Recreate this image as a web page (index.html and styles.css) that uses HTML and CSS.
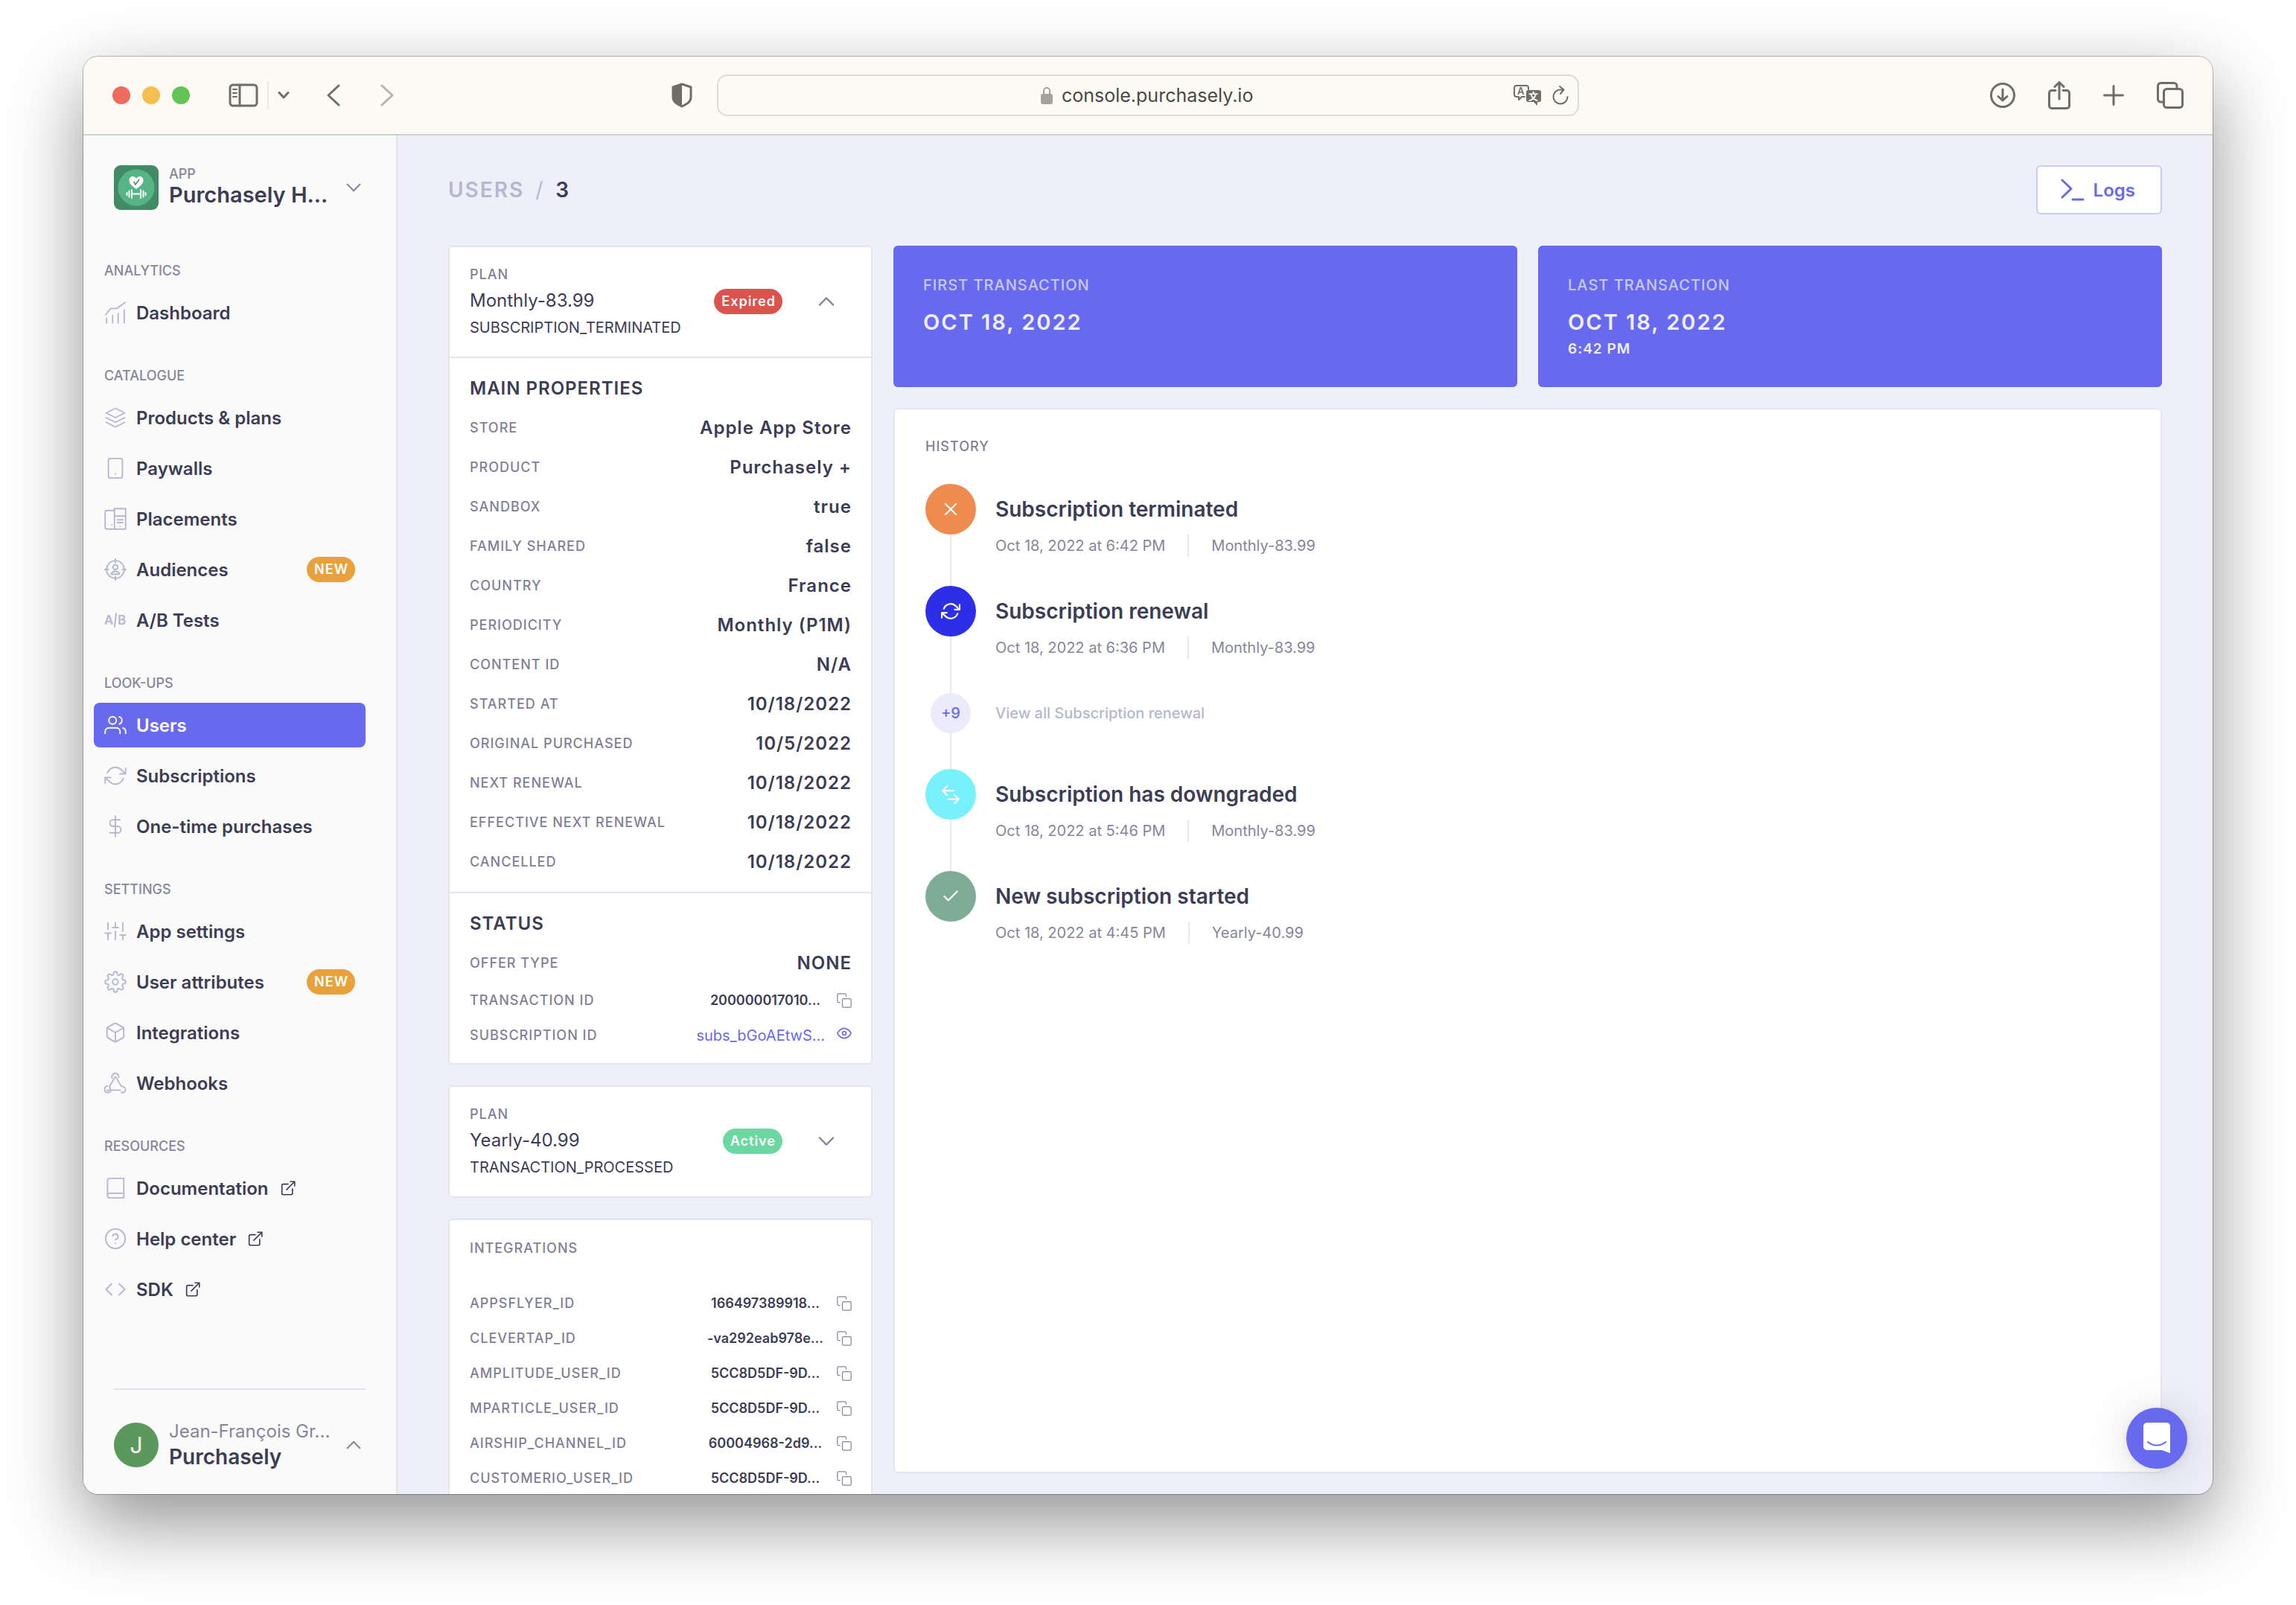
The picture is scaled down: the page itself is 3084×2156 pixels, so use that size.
FILE: index.html
```html
<!DOCTYPE html>
<html lang="en">
<head>
  <meta charset="UTF-8">
  <title>Purchasely Console - Users</title>
  <meta name="viewport" content="width=device-width, initial-scale=1">
  <link rel="stylesheet" href="styles.css">
</head>
<body>
  <!-- shared icons -->
  <svg class="sprite" aria-hidden="true">
    <symbol id="i-chart" viewBox="0 0 24 24"><path d="M1.5 14 7 7.5h6.500L22.500 1M2.500 23v-5M9 23v-8M15 23V13M21.500 23V9"/></symbol>
    <symbol id="i-layers" viewBox="0 0 24 24"><path d="M12 2 2 7l10 5 10-5-10-5zM2 17l10 5 10-5M2 12l10 5 10-5"/></symbol>
    <symbol id="i-tablet" viewBox="0 0 24 24"><rect x="4.500" y="1.500" width="15" height="21" rx="2"/><path d="M12 18h.01"/></symbol>
    <symbol id="i-placements" viewBox="0 0 24 24"><path d="M11 3H3a2 2 0 0 0-2 2v16a2 2 0 0 0 2 2h8M8 18.500h.01M11 1h12v22H11zM11 9h12M14 13h6M14 16h6M17 20h.01"/></symbol>
    <symbol id="i-target" viewBox="0 0 24 24"><circle cx="12" cy="12" r="9.500"/><circle cx="12" cy="9.500" r="2.500"/><path d="M7.500 17c0-4 9-4 9 0zM12 .5v4M12 19.500v4M.5 12h4M19.500 12h4"/></symbol>
    <symbol id="i-users" viewBox="0 0 24 24"><path d="M17 21v-2a4 4 0 0 0-4-4H5a4 4 0 0 0-4 4v2"/><circle cx="9" cy="7" r="4"/><path d="M23 21v-2a4 4 0 0 0-3-3.870M16 3.130a4 4 0 0 1 0 7.750"/></symbol>
    <symbol id="i-refresh" viewBox="0 0 24 24"><path d="M23 4v6h-6M1 20v-6h6M3.510 9a9 9 0 0 1 14.850-3.360L23 10M1 14l4.640 4.360A9 9 0 0 0 20.490 15"/></symbol>
    <symbol id="i-dollar" viewBox="0 0 24 24"><path d="M12 1v22M17 5H9.500a3.500 3.500 0 0 0 0 7h5a3.500 3.500 0 0 1 0 7H6"/></symbol>
    <symbol id="i-sliders" viewBox="0 0 24 24"><path d="M4 21v-7M4 10V3M12 21v-9M12 8V3M20 21v-5M20 12V3M1 14h6M9 8h6M17 16h6"/></symbol>
    <symbol id="i-settings" viewBox="0 0 24 24"><circle cx="12" cy="12" r="3"/><path d="M19.400 15a1.650 1.650 0 0 0 .33 1.820l.06.06a2 2 0 0 1-2.830 2.830l-.06-.06a1.650 1.650 0 0 0-2.800 1.170V21a2 2 0 0 1-4 0v-.09A1.650 1.650 0 0 0 9 19.400a1.650 1.650 0 0 0-1.820.33l-.06.06a2 2 0 0 1-2.830-2.830l.06-.06a1.650 1.650 0 0 0-1.170-2.800H3a2 2 0 0 1 0-4h.09A1.650 1.650 0 0 0 4.600 9a1.650 1.650 0 0 0-.33-1.820l-.06-.06a2 2 0 0 1 2.830-2.830l.06.06A1.650 1.650 0 0 0 9 4.680a1.650 1.650 0 0 0 1-1.510V3a2 2 0 0 1 4 0v.09a1.650 1.650 0 0 0 2.820 1.170l.06-.06a2 2 0 0 1 2.830 2.830l-.06.06a1.650 1.650 0 0 0 1.170 2.910H21a2 2 0 0 1 0 4h-.09a1.650 1.650 0 0 0-1.510 1z"/></symbol>
    <symbol id="i-box" viewBox="0 0 24 24"><path d="M21 16V8a2 2 0 0 0-1-1.730l-7-4a2 2 0 0 0-2 0l-7 4A2 2 0 0 0 3 8v8a2 2 0 0 0 1 1.730l7 4a2 2 0 0 0 2 0l7-4A2 2 0 0 0 21 16zM3.270 6.960 12 12.010l8.730-5.050M12 22.080V12"/></symbol>
    <symbol id="i-webhook" viewBox="0 0 24 24"><path d="M8.500 6.500a3.700 3.700 0 1 1 7-.5M11.500 5.500 5.500 16a2 2 0 0 1-2.500 3.500M3.500 15a3.600 3.600 0 1 0 4 4.500h10M12.500 5.500l6 10a4 4 0 0 1 4.500 4 3.500 3.500 0 0 1-4.500 2.500"/></symbol>
    <symbol id="i-book" viewBox="0 0 24 24"><path d="M3.500 20A2.500 2.500 0 0 1 6 17.500h15M6 1.500h15v21H6A2.500 2.500 0 0 1 3.500 20V4A2.500 2.500 0 0 1 6 1.500z"/></symbol>
    <symbol id="i-help" viewBox="0 0 24 24"><circle cx="12" cy="12" r="10.500"/><path d="M9.090 9a3 3 0 0 1 5.830 1c0 2-3 3-3 3M12 17h.01"/></symbol>
    <symbol id="i-code" viewBox="0 0 24 24"><path d="m16 18 6-6-6-6M8 6l-6 6 6 6"/></symbol>
    <symbol id="i-external" viewBox="0 0 24 24"><path d="M19 13v7.500a2 2 0 0 1-2 2H4a2 2 0 0 1-2-2v-13a2 2 0 0 1 2-2h8M15.500 1.500h7v7M9.500 14.500l13-13"/></symbol>
    <symbol id="i-copy" viewBox="0 0 24 24"><rect x="9" y="9" width="14" height="14" rx="2"/><path d="M5 15H3a2 2 0 0 1-2-2V3a2 2 0 0 1 2-2h10a2 2 0 0 1 2 2v2"/></symbol>
    <symbol id="i-eye" viewBox="0 0 24 24"><path d="M1 12s4-8 11-8 11 8 11 8-4 8-11 8-11-8-11-8z"/><circle cx="12" cy="12" r="3"/></symbol>
    <symbol id="i-down" viewBox="0 0 24 24"><path d="m2 7 10 10L22 7"/></symbol>
    <symbol id="i-up" viewBox="0 0 24 24"><path d="m2 17 10-10 10 10"/></symbol>
    <symbol id="i-x" viewBox="0 0 24 24"><path d="M18.500 5.500l-13 13M5.500 5.500l13 13"/></symbol>
    <symbol id="i-check" viewBox="0 0 24 24"><path d="M20 6 9 17l-5-5"/></symbol>
    <symbol id="i-swap" viewBox="0 0 24 24"><path d="M16 7.500H2M7.500 2 2 7.500 7.500 13M8.500 18H22M16.500 12.500 22 18l-5.500 5.500"/></symbol>
  </svg>

  <div class="window">
    <header class="toolbar">
      <div class="toolbar-left">
        <div class="lights">
          <span class="light red"></span>
          <span class="light yellow"></span>
          <span class="light green"></span>
        </div>
        <button class="tool side-toggle" aria-label="Sidebar">
          <svg width="40" height="32" viewBox="0 0 40 32"><rect x="2" y="2" width="36" height="28" rx="4"/><path d="M15 2v28"/><path class="thin" d="M6 8h5M6 13h5M6 18h5"/></svg>
        </button>
        <span class="tool-divider"></span>
        <button class="tool tab-menu" aria-label="Tab groups">
          <svg width="16" height="10" viewBox="0 0 16 10"><path d="m2 1.500 6 6.500 6-6.500"/></svg>
        </button>
        <button class="tool back" aria-label="Back">
          <svg width="18" height="30" viewBox="0 0 18 30"><path d="M16 2 2 15l14 13"/></svg>
        </button>
        <button class="tool forward" aria-label="Forward" disabled>
          <svg width="18" height="30" viewBox="0 0 18 30"><path d="m2 2 14 13L2 28"/></svg>
        </button>
        <button class="tool shield" aria-label="Privacy report">
          <svg width="28" height="34" viewBox="0 0 28 34"><path d="M14 2 26 6v14c0 6-6 9-12 12C8 29 2 26 2 20V6z"/><path class="solid" d="M14 2 2 6v14c0 6 6 9 12 12z"/></svg>
        </button>
      </div>

      <div class="address">
        <div class="address-side"></div>
        <svg class="lock" width="16" height="24" viewBox="0 0 16 24"><path d="M4 11V6a4 4 0 0 1 8 0v5" fill="none" stroke="#a5a29e" stroke-width="2"/><rect y="10" width="16" height="14" rx="3" fill="#a5a29e"/></svg>
        <input type="text" class="url" value="console.purchasely.io" aria-label="Address">
        <div class="address-side address-tools">
          <button class="tool" aria-label="Translate">
            <svg width="38" height="28" viewBox="0 0 38 28"><path class="thin" d="M15 16h-4l-4 4v-4H4a3 3 0 0 1-3-3V4a3 3 0 0 1 3-3h13a3 3 0 0 1 3 3v2"/><path class="solid" d="M20 7h14a3 3 0 0 1 3 3v10a3 3 0 0 1-3 3h-2v5l-5-5h-7a3 3 0 0 1-3-3V10a3 3 0 0 1 3-3z"/><text x="5" y="13" font-size="13">A</text><text class="inverse" x="20" y="20" font-size="13">文</text></svg>
          </button>
          <button class="tool" aria-label="Reload">
            <svg width="22" height="28" viewBox="0 0 22 28"><path class="thin" d="M20.500 16a9.500 9.500 0 1 1-9.500-9.500h4.500M10 2l5.500 4.500L11 12"/></svg>
          </button>
        </div>
      </div>

      <div class="toolbar-right">
        <button class="tool" aria-label="Downloads">
          <svg width="34" height="34" viewBox="0 0 34 34"><circle cx="17" cy="17" r="15.500"/><path d="M17 9v15M11 18.500l6 5.500 6-5.500"/></svg>
        </button>
        <button class="tool" aria-label="Share">
          <svg width="30" height="38" viewBox="0 0 30 38"><path d="M10 12.500H5a3.500 3.500 0 0 0-3.500 3.500v17A3.500 3.500 0 0 0 5 36.500h20a3.500 3.500 0 0 0 3.500-3.500V16a3.500 3.500 0 0 0-3.500-3.500h-5M15 24V2M9 7.500l6-6 6 6"/></svg>
        </button>
        <button class="tool" aria-label="New tab">
          <svg width="28" height="28" viewBox="0 0 28 28"><path d="M14 1.500v25M1.500 14h25"/></svg>
        </button>
        <button class="tool" aria-label="Tab overview">
          <svg width="36" height="36" viewBox="0 0 36 36"><rect x="9.500" y="9.500" width="25" height="25" rx="4"/><path d="M9 27H5.500a4 4 0 0 1-4-4V5.500a4 4 0 0 1 4-4H23a4 4 0 0 1 4 4V9"/></svg>
        </button>
      </div>
    </header>

    <div class="app">
      <aside class="sidebar">
        <button class="switcher">
          <svg class="app-logo" width="60" height="60" viewBox="0 0 60 60"><rect width="60" height="60" rx="9" fill="#428a66"/><circle cx="30" cy="30" r="24.500" fill="#57b487"/><path d="M30 32c-5-4-9.500-7-9.500-11.500 0-6.500 7.500-7 9.500-2.500 2-4.500 9.500-4 9.500 2.500C39.500 25 35 28 30 32z" fill="#fff"/><path d="m26.500 22 2.500 4 5-7" fill="none" stroke="#428a66" stroke-width="1.500"/><path d="M26 38.500h8M24 33v11M36 33v11M20.500 34.500v8M39.500 34.500v8M17.500 37v3M42.500 37v3" stroke="#fff" stroke-width="2" stroke-linecap="round"/></svg>
          <span class="switcher-text">
            <span class="switcher-label">APP</span>
            <span class="app-name">Purchasely H...</span>
          </span>
          <svg class="icon chevron"><use href="#i-down"/></svg>
        </button>

        <nav class="menu">
          <div class="menu-group">
            <h2>ANALYTICS</h2>
            <a href="#"><svg class="icon"><use href="#i-chart"/></svg>Dashboard</a>
          </div>
          <div class="menu-group">
            <h2>CATALOGUE</h2>
            <a href="#"><svg class="icon"><use href="#i-layers"/></svg>Products &amp; plans</a>
            <a href="#"><svg class="icon"><use href="#i-tablet"/></svg>Paywalls</a>
            <a href="#"><svg class="icon"><use href="#i-placements"/></svg>Placements</a>
            <a href="#"><svg class="icon"><use href="#i-target"/></svg>Audiences<span class="badge new">NEW</span></a>
            <a href="#"><svg class="icon ab" viewBox="0 0 30 30"><text x="0" y="21">A</text><path d="M16 6l-2 18"/><text x="18" y="21">B</text></svg>A/B Tests</a>
          </div>
          <div class="menu-group">
            <h2>LOOK-UPS</h2>
            <a href="#" class="active"><svg class="icon"><use href="#i-users"/></svg>Users</a>
            <a href="#"><svg class="icon"><use href="#i-refresh"/></svg>Subscriptions</a>
            <a href="#"><svg class="icon"><use href="#i-dollar"/></svg>One-time purchases</a>
          </div>
          <div class="menu-group">
            <h2>SETTINGS</h2>
            <a href="#"><svg class="icon"><use href="#i-sliders"/></svg>App settings</a>
            <a href="#"><svg class="icon"><use href="#i-settings"/></svg>User attributes<span class="badge new">NEW</span></a>
            <a href="#"><svg class="icon"><use href="#i-box"/></svg>Integrations</a>
            <a href="#"><svg class="icon"><use href="#i-webhook"/></svg>Webhooks</a>
          </div>
          <div class="menu-group">
            <h2>RESOURCES</h2>
            <a href="#"><svg class="icon"><use href="#i-book"/></svg>Documentation<svg class="icon external"><use href="#i-external"/></svg></a>
            <a href="#"><svg class="icon"><use href="#i-help"/></svg>Help center<svg class="icon external"><use href="#i-external"/></svg></a>
            <a href="#"><svg class="icon"><use href="#i-code"/></svg>SDK<svg class="icon external"><use href="#i-external"/></svg></a>
          </div>
        </nav>

        <div class="account">
          <button class="switcher">
            <span class="avatar">J</span>
            <span class="switcher-text">
              <span class="user-name">Jean-François Gr...</span>
              <span class="company">Purchasely</span>
            </span>
            <svg class="icon chevron"><use href="#i-up"/></svg>
          </button>
        </div>
      </aside>

      <main class="main">
        <div class="page-head">
          <h1 class="breadcrumb"><a href="#">USERS</a><span class="slash">/</span><span>3</span></h1>
          <button class="logs">
            <svg width="32" height="30" viewBox="0 0 32 30"><path d="m2 2 12 11.500L2 25M16 28h14"/></svg>
            Logs
          </button>
        </div>

        <div class="columns">
          <div class="col-left">
            <section class="card">
              <button class="plan-head">
                <span class="plan-text">
                  <span class="label">PLAN</span>
                  <span class="plan-name">Monthly-83.99</span>
                  <span class="plan-state">SUBSCRIPTION_TERMINATED</span>
                </span>
                <span class="badge expired">Expired</span>
                <svg class="icon chevron"><use href="#i-up"/></svg>
              </button>
              <div class="props">
                <h3>MAIN PROPERTIES</h3>
                <dl>
                  <div><dt>STORE</dt><dd>Apple App Store</dd></div>
                  <div><dt>PRODUCT</dt><dd>Purchasely +</dd></div>
                  <div><dt>SANDBOX</dt><dd>true</dd></div>
                  <div><dt>FAMILY SHARED</dt><dd>false</dd></div>
                  <div><dt>COUNTRY</dt><dd>France</dd></div>
                  <div><dt>PERIODICITY</dt><dd>Monthly (P1M)</dd></div>
                  <div><dt>CONTENT ID</dt><dd>N/A</dd></div>
                  <div><dt>STARTED AT</dt><dd>10/18/2022</dd></div>
                  <div><dt>ORIGINAL PURCHASED</dt><dd>10/5/2022</dd></div>
                  <div><dt>NEXT RENEWAL</dt><dd>10/18/2022</dd></div>
                  <div><dt>EFFECTIVE NEXT RENEWAL</dt><dd>10/18/2022</dd></div>
                  <div><dt>CANCELLED</dt><dd>10/18/2022</dd></div>
                </dl>
              </div>
              <div class="props">
                <h3>STATUS</h3>
                <dl>
                  <div><dt>OFFER TYPE</dt><dd>NONE</dd></div>
                  <div class="id-row"><dt>TRANSACTION ID</dt><dd><span class="id">200000017010...</span><button aria-label="Copy"><svg class="icon"><use href="#i-copy"/></svg></button></dd></div>
                  <div class="id-row"><dt>SUBSCRIPTION ID</dt><dd><a href="#">subs_bGoAEtwS...</a><button class="view" aria-label="View"><svg class="icon"><use href="#i-eye"/></svg></button></dd></div>
                </dl>
              </div>
            </section>

            <section class="card">
              <button class="plan-head">
                <span class="plan-text">
                  <span class="label">PLAN</span>
                  <span class="plan-name">Yearly-40.99</span>
                  <span class="plan-state">TRANSACTION_PROCESSED</span>
                </span>
                <span class="badge live">Active</span>
                <svg class="icon chevron"><use href="#i-down"/></svg>
              </button>
            </section>

            <section class="card integrations">
              <h3>INTEGRATIONS</h3>
              <dl>
                <div class="id-row"><dt>APPSFLYER_ID</dt><dd><span class="id">166497389918...</span><button aria-label="Copy"><svg class="icon"><use href="#i-copy"/></svg></button></dd></div>
                <div class="id-row"><dt>CLEVERTAP_ID</dt><dd><span class="id">-va292eab978e...</span><button aria-label="Copy"><svg class="icon"><use href="#i-copy"/></svg></button></dd></div>
                <div class="id-row"><dt>AMPLITUDE_USER_ID</dt><dd><span class="id">5CC8D5DF-9D...</span><button aria-label="Copy"><svg class="icon"><use href="#i-copy"/></svg></button></dd></div>
                <div class="id-row"><dt>MPARTICLE_USER_ID</dt><dd><span class="id">5CC8D5DF-9D...</span><button aria-label="Copy"><svg class="icon"><use href="#i-copy"/></svg></button></dd></div>
                <div class="id-row"><dt>AIRSHIP_CHANNEL_ID</dt><dd><span class="id">60004968-2d9...</span><button aria-label="Copy"><svg class="icon"><use href="#i-copy"/></svg></button></dd></div>
                <div class="id-row"><dt>CUSTOMERIO_USER_ID</dt><dd><span class="id">5CC8D5DF-9D...</span><button aria-label="Copy"><svg class="icon"><use href="#i-copy"/></svg></button></dd></div>
              </dl>
            </section>
          </div>

          <div class="col-right">
            <div class="stats">
              <div class="stat">
                <h3>FIRST TRANSACTION</h3>
                <p class="date">OCT 18, 2022</p>
              </div>
              <div class="stat">
                <h3>LAST TRANSACTION</h3>
                <p class="date">OCT 18, 2022</p>
                <p class="time">6:42 PM</p>
              </div>
            </div>

            <section class="card history">
              <h2 class="label">HISTORY</h2>
              <ol class="timeline">
                <li>
                  <div class="marker"><span class="dot orange"><svg class="icon"><use href="#i-x"/></svg></span></div>
                  <div class="event">
                    <h3>Subscription terminated</h3>
                    <p><span>Oct 18, 2022 at 6:42 PM</span><span>Monthly-83.99</span></p>
                  </div>
                </li>
                <li>
                  <div class="marker"><span class="dot blue"><svg class="icon"><use href="#i-refresh"/></svg></span></div>
                  <div class="event">
                    <h3>Subscription renewal</h3>
                    <p><span>Oct 18, 2022 at 6:36 PM</span><span>Monthly-83.99</span></p>
                  </div>
                </li>
                <li class="more">
                  <div class="marker"><span class="count">+9</span></div>
                  <a href="#">View all Subscription renewal</a>
                </li>
                <li>
                  <div class="marker"><span class="dot cyan"><svg class="icon"><use href="#i-swap"/></svg></span></div>
                  <div class="event">
                    <h3>Subscription has downgraded</h3>
                    <p><span>Oct 18, 2022 at 5:46 PM</span><span>Monthly-83.99</span></p>
                  </div>
                </li>
                <li>
                  <div class="marker"><span class="dot sage"><svg class="icon"><use href="#i-check"/></svg></span></div>
                  <div class="event">
                    <h3>New subscription started</h3>
                    <p><span>Oct 18, 2022 at 4:45 PM</span><span>Yearly-40.99</span></p>
                  </div>
                </li>
              </ol>
            </section>
          </div>
        </div>
      </main>
    </div>

    <button class="chat" aria-label="Open chat">
      <svg width="36" height="42" viewBox="0 0 36 42"><path d="M5 0h26a5 5 0 0 1 5 5v36l-11-4H5a5 5 0 0 1-5-5V5a5 5 0 0 1 5-5z" fill="#fff"/><path d="M6 26c7 6 17 6 24 0" fill="none" stroke="#6769ef" stroke-width="2" stroke-linecap="round"/></svg>
    </button>
  </div>
</body>
</html>
```
FILE: styles.css
```css
* { box-sizing: border-box; }
body {
  margin: 0;
  height: 100vh;
  padding: 76px 112px 149px;
  background: #fff;
  color: #3c3d55;
  font-family: Inter, "Noto Sans CJK SC", sans-serif;
  font-size: 24px;
  overflow: hidden;
}
h1, h2, h3, p, dl, dd, ol { margin: 0; padding: 0; }
a { color: inherit; text-decoration: none; }
button {
  border: none;
  background: none;
  padding: 0;
  font: inherit;
  color: inherit;
  text-align: left;
  cursor: pointer;
}
svg { display: block; flex-shrink: 0; }
.sprite { position: absolute; width: 0; height: 0; }
.icon {
  width: 30px;
  height: 30px;
  fill: none;
  stroke: currentColor;
  stroke-width: 1.5;
  stroke-linecap: round;
  stroke-linejoin: round;
}
.icon.chevron { width: 22px; height: 22px; stroke-width: 2.5; color: #85869b; }
.switcher .icon.chevron { width: 20px; height: 20px; }

/* browser window */
.window {
  position: relative;
  display: flex;
  flex-direction: column;
  height: 100%;
  border-radius: 20px;
  overflow: hidden;
  background: #efeffa;
  box-shadow: 0 0 0 1px rgba(0, 0, 0, 0.25), 0 38px 100px rgba(0, 0, 0, 0.43);
}
.toolbar {
  display: grid;
  grid-template-columns: 1fr 1158px 1fr;
  align-items: center;
  height: 106px;
  flex-shrink: 0;
  padding: 0 39px;
  background: #fdfaf4;
  border-bottom: 2px solid #cfcfd8;
}
.toolbar-left, .toolbar-right { display: flex; align-items: center; }
.toolbar-right { justify-content: flex-end; gap: 44px; }
.lights { display: flex; gap: 16px; }
.light { width: 24px; height: 24px; border-radius: 50%; }
.red { background: #ec6a5e; }
.yellow { background: #f4bf4f; }
.green { background: #61c554; }
.tool svg {
  fill: none;
  stroke: #706d66;
  stroke-width: 3;
  stroke-linecap: round;
  stroke-linejoin: round;
}
.tool .thin { stroke-width: 2; }
.tool .solid { fill: #706d66; stroke: none; }
.tool text { fill: #706d66; stroke: none; font-weight: 600; }
.tool .inverse { fill: #fff; }
.side-toggle { margin-left: 52px; }
.tool-divider { width: 2px; height: 36px; margin: 0 12px; background: #ebe8e3; }
.back { margin-left: 50px; }
.forward { margin-left: 54px; opacity: 0.5; }
.shield { margin: 0 33px 0 auto; }
.address {
  display: flex;
  align-items: center;
  height: 56px;
  padding: 0 12px;
  border: 2px solid #dfdcd7;
  border-radius: 14px;
}
.address-side { flex: 1; }
.address-tools { display: flex; justify-content: flex-end; gap: 14px; }
.lock { margin-right: 12px; }
.url {
  width: 260px;
  padding: 0;
  border: none;
  background: none;
  font: inherit;
  font-size: 25px;
  color: #4a4845;
  outline: none;
}

/* sidebar */
.app { display: flex; flex: 1; min-height: 0; }
.sidebar {
  display: flex;
  flex-direction: column;
  width: 422px;
  flex-shrink: 0;
  padding: 40px 41px 36px 14px;
  background: #fafafa;
  border-right: 2px solid #e4e4f0;
}
.switcher {
  display: flex;
  align-items: center;
  width: 100%;
  height: 60px;
  gap: 14px;
  padding: 0 6px 0 27px;
}
.switcher-text { flex: 1; white-space: nowrap; }
.switcher-text span { display: block; }
.switcher-label { font-size: 18px; font-weight: 500; line-height: 22px; color: #85869b; }
.app-name { padding-bottom: 2px; font-size: 29px; font-weight: 600; line-height: 34px; }
.company { font-size: 28px; font-weight: 600; line-height: 36px; }
.user-name { line-height: 32px; color: #85869b; }
.menu { padding-top: 70px; }
.menu-group { display: flex; flex-direction: column; gap: 8px; margin-bottom: 43px; }
.menu-group h2 {
  padding-left: 14px;
  margin-bottom: 6px;
  font-size: 18px;
  font-weight: 500;
  line-height: 24px;
  color: #85869b;
}
.menu-group a {
  display: flex;
  align-items: center;
  gap: 13px;
  height: 60px;
  padding: 0 14px;
  border-radius: 8px;
  font-weight: 600;
}
.menu-group .icon { color: #b5b7d0; }
.menu-group .external { width: 20px; height: 20px; margin-left: 3px; stroke-width: 2; color: #3c3d55; }
.menu-group .active { background: #6769ef; color: #fff; }
.menu-group .active .icon { color: #fff; }
.ab { stroke-width: 2; }
.ab text { fill: currentColor; stroke: none; font-size: 17px; font-weight: 600; }
.account { margin: auto 0 0 27px; padding-top: 44px; border-top: 2px solid #e4e4f0; }
.account .switcher { padding-left: 0; }
.avatar {
  display: flex;
  align-items: center;
  justify-content: center;
  width: 60px;
  height: 60px;
  border-radius: 50%;
  background: #5a985c;
  color: #fff;
  font-size: 30px;
}

.badge {
  height: 34px;
  padding: 0 9px 0 10px;
  border-radius: 17px;
  color: #fff;
  font-size: 18px;
  font-weight: 600;
  line-height: 34px;
  letter-spacing: 1px;
}
.new { margin-left: auto; background: #e9a13b; }
.expired { background: #dd524c; }
.live { background: #6bd8a2; }

/* page */
.main {
  display: flex;
  flex-direction: column;
  flex: 1;
  min-width: 0;
  padding: 40px 68px 28px;
}
.page-head {
  display: flex;
  align-items: center;
  justify-content: space-between;
  height: 66px;
  margin-bottom: 42px;
}
.breadcrumb { display: flex; gap: 15px; font-size: 28px; font-weight: 600; letter-spacing: 2px; }
.breadcrumb a { color: #b5b7d0; }
.slash { color: #b5b7d0; font-weight: 400; }
.logs {
  display: flex;
  align-items: center;
  gap: 12px;
  height: 66px;
  padding: 0 34px 0 31px;
  border: 2px solid #c9caf9;
  border-radius: 6px;
  background: #fff;
  color: #6769ef;
  font-weight: 600;
}
.logs svg { fill: none; stroke: #6769ef; stroke-width: 3; stroke-linecap: round; stroke-linejoin: round; }
.columns {
  display: grid;
  grid-template-columns: 570px 1fr;
  gap: 28px;
  flex: 1;
  min-height: 0;
}
.col-left, .col-right { display: flex; flex-direction: column; gap: 28px; min-height: 0; }
.card { flex-shrink: 0; background: #fff; border: 2px solid #e4e4f0; border-radius: 6px; }
.label, dt, .integrations h3 {
  font-size: 18px;
  font-weight: 500;
  letter-spacing: 1px;
  color: #7f8096;
}

/* plans */
.plan-head { display: flex; align-items: center; width: 100%; padding: 25px 49px 26px 27px; }
.plan-text { display: flex; flex-direction: column; flex: 1; gap: 4px; }
.plan-head .label { line-height: 24px; }
.plan-name { line-height: 38px; }
.plan-state { font-size: 20px; line-height: 26px; }
.plan-head .chevron { margin-left: 48px; }
.props { padding: 14px 26px 14px 27px; border-top: 2px solid #e4e4f0; }
.props h3 { font-size: 24px; font-weight: 600; line-height: 53px; letter-spacing: 1px; }
dl > div { display: flex; align-items: center; justify-content: space-between; height: 53px; }
dd { font-weight: 600; letter-spacing: 1px; }
dl > .id-row { height: 47px; }
.id-row dd { display: flex; align-items: center; gap: 16px; font-size: 18px; letter-spacing: 0; }
.id-row .id { width: 160px; text-align: center; }
.id-row a { color: #6769ef; font-size: 20px; font-weight: 400; }
.id-row .icon { width: 20px; height: 20px; color: #85869b; }
.id-row .view { padding-bottom: 6px; }
.id-row .view .icon { stroke-width: 2; color: #6769ef; }
.integrations { padding: 14px 26px 14px 27px; }
.integrations h3 { margin-bottom: 27px; line-height: 47px; }

/* transactions */
.stats { display: grid; grid-template-columns: 1fr 1fr; gap: 28px; }
.stat { min-height: 190px; padding: 38px 40px; border-radius: 6px; background: #6769ef; color: #efeffc; }
.stat h3 { font-size: 20px; font-weight: 500; line-height: 30px; letter-spacing: 1px; color: #c9caf9; }
.date { margin-top: 16px; font-size: 29px; font-weight: 600; line-height: 38px; letter-spacing: 2px; }
.time { margin-top: 4px; font-size: 19px; font-weight: 600; line-height: 26px; letter-spacing: 1px; }

/* history */
.history { flex: 1; padding: 38px 41px; }
.history .label { margin-bottom: 38px; line-height: 24px; }
.timeline { list-style: none; }
.timeline li { display: flex; gap: 26px; min-height: 137px; }
.timeline li:last-child { min-height: 0; }
.marker { display: flex; flex-direction: column; align-items: center; width: 68px; }
.marker::after { content: ""; flex: 1; width: 2px; background: #e8e8f1; }
li:last-child .marker::after { display: none; }
.dot {
  display: flex;
  align-items: center;
  justify-content: center;
  width: 68px;
  height: 68px;
  border-radius: 50%;
  color: #fff;
}
.dot .icon { width: 26px; height: 26px; stroke-width: 2; }
.orange { background: #ef8b4f; }
.blue { background: #2d2ee8; }
.cyan { background: #76f1fd; }
.sage { background: #7fac97; }
.event h3 { font-size: 28px; font-weight: 600; line-height: 68px; }
.event p { display: flex; font-size: 20px; line-height: 30px; color: #85869b; }
.event p span + span { margin-left: 30px; padding-left: 30px; border-left: 2px solid #e8e8f1; }
.timeline .more { min-height: 109px; }
.more .marker::before { content: ""; width: 2px; height: 7px; background: #e8e8f1; }
.count {
  width: 54px;
  height: 54px;
  border-radius: 50%;
  background: #ecebfc;
  color: #6769ef;
  font-size: 20px;
  font-weight: 500;
  line-height: 54px;
  text-align: center;
}
.more a { padding-top: 7px; font-size: 20px; font-weight: 500; line-height: 54px; color: #b5b7d0; }

.chat {
  position: absolute;
  right: 34px;
  bottom: 34px;
  display: flex;
  align-items: center;
  justify-content: center;
  width: 82px;
  height: 82px;
  border-radius: 50%;
  background: #6769ef;
  box-shadow: 0 2px 12px rgba(0, 0, 0, 0.08), 0 4px 64px rgba(0, 0, 0, 0.14);
}
```
